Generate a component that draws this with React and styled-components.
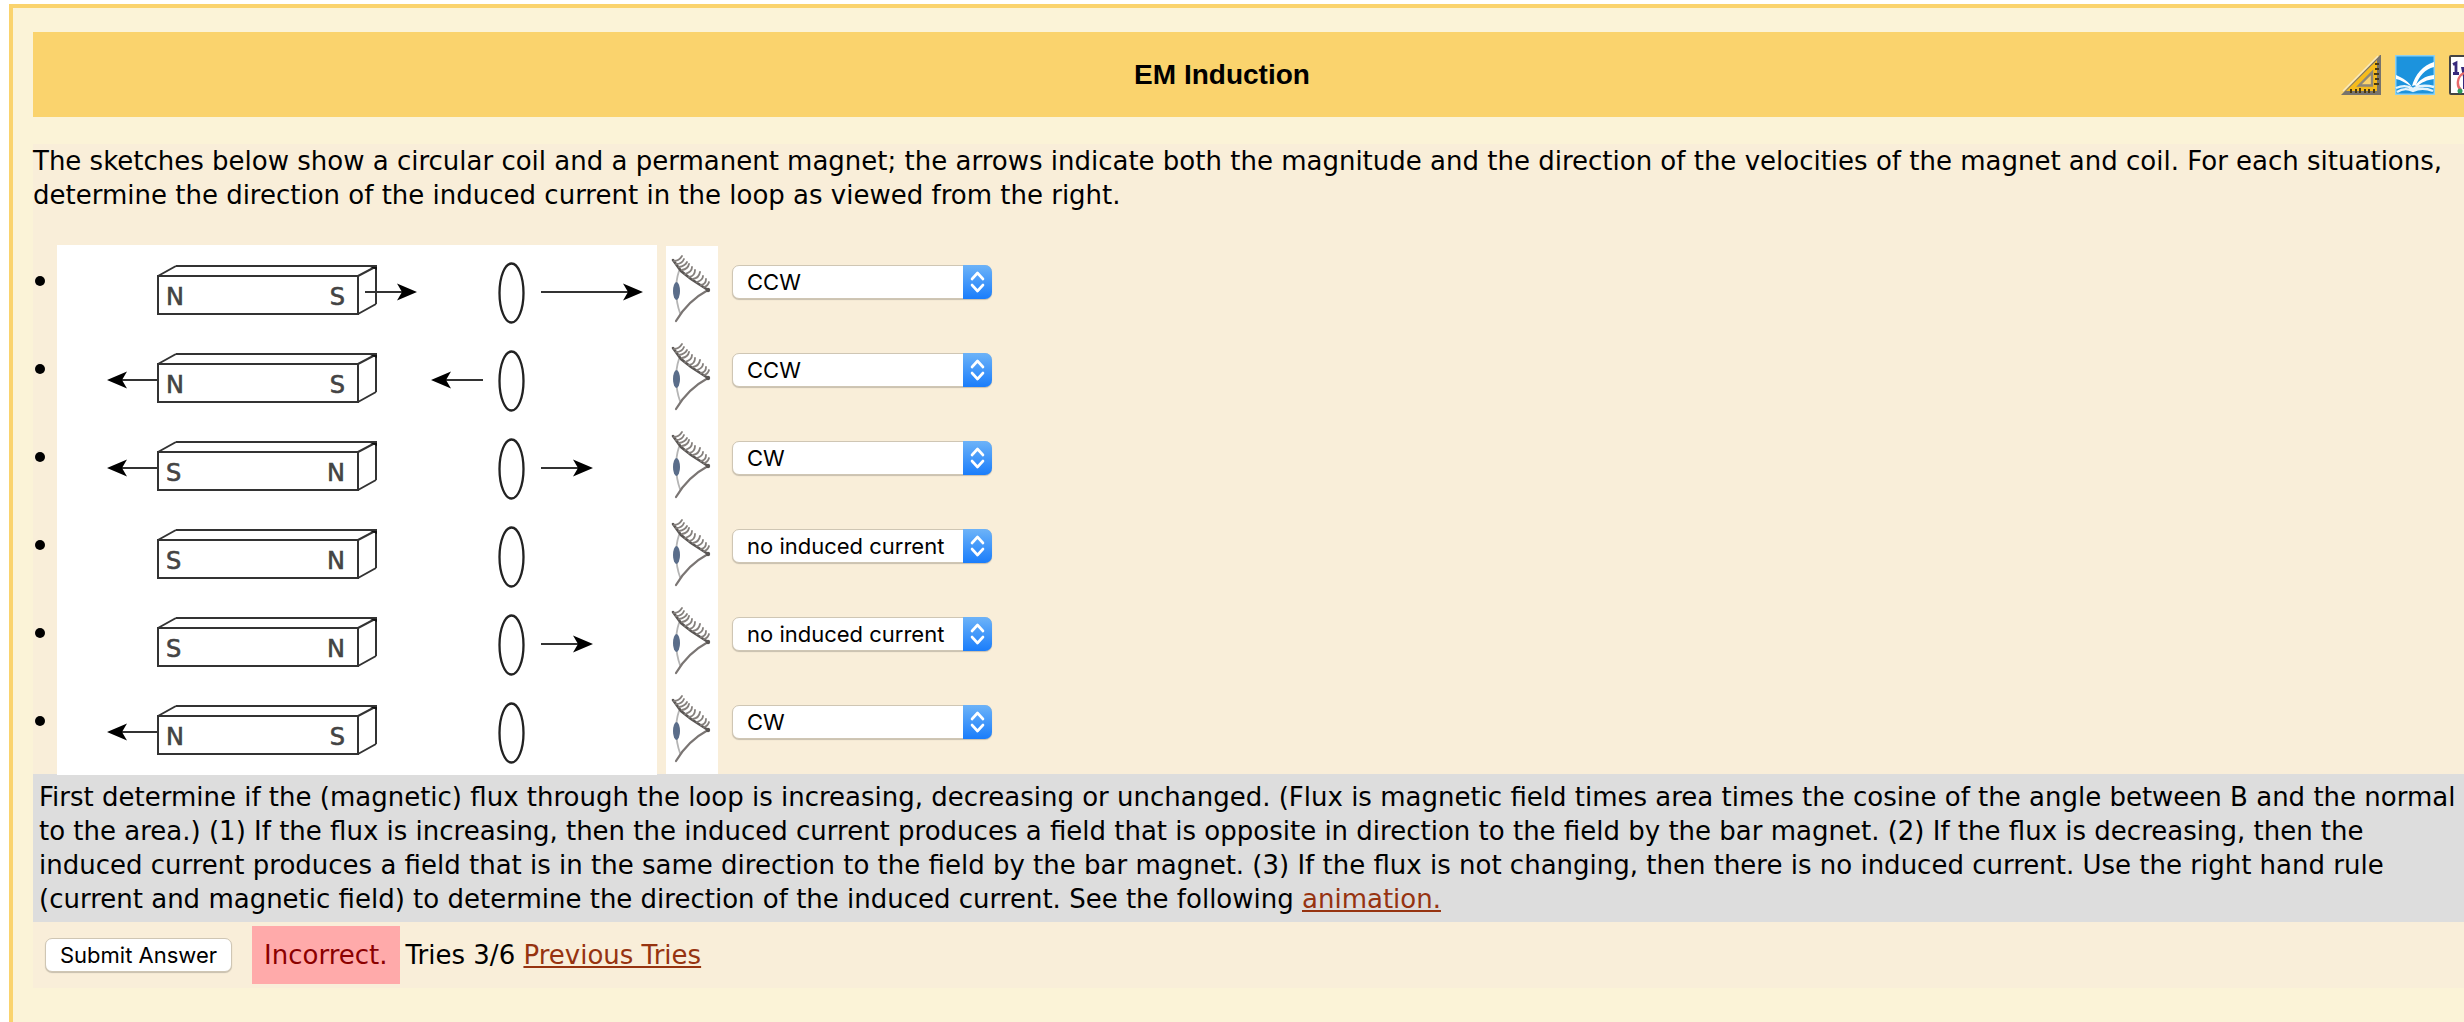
import styled, { createGlobalStyle } from "styled-components";

const sketches = [
  { poles: ["N", "S"], magnet: [365, 417], coil: [541, 643], answer: "CCW" },
  { poles: ["N", "S"], magnet: [158, 107], coil: [483, 431], answer: "CCW" },
  { poles: ["S", "N"], magnet: [158, 107], coil: [541, 593], answer: "CW" },
  { poles: ["S", "N"], answer: "no induced current" },
  { poles: ["S", "N"], coil: [541, 593], answer: "no induced current" },
  { poles: ["N", "S"], magnet: [158, 107], answer: "CW" },
];

const answers = ["CW", "CCW", "no induced current"];

const Arrow = ({ from, to }) => {
  const d = to > from ? -1 : 1;
  return (
    <g>
      <path d={`M${from} 47H${to + d * 8}`} stroke="#333" strokeWidth="2" />
      <path
        d={`M${to} 47L${to + d * 20} 38.5L${to + d * 15} 47L${to + d * 20} 55.5Z`}
        fill="#000"
      />
    </g>
  );
};

const Sketch = ({ poles, magnet, coil }) => (
  <SketchArt viewBox="57 0 600 90" role="img" aria-label="Magnet and coil">
    <g fill="none" stroke="#333" strokeWidth="2">
      <path d="M158 31H358V69H158Z" />
      <path d="M176 21H376V59" />
      <path d="M158 31L176 21M358 31L376 21.5M358 69L376 59" />
      <path d="M370 22H377V25Z" fill="#111" stroke="none" />
      <ellipse cx="511.5" cy="48" rx="12" ry="29.5" stroke="#222" strokeWidth="2.3" />
    </g>
    <PoleLabel x="166" y="60">{poles[0]}</PoleLabel>
    <PoleLabel x="345" y="60" textAnchor="end">{poles[1]}</PoleLabel>
    {magnet && <Arrow from={magnet[0]} to={magnet[1]} />}
    {coil && <Arrow from={coil[0]} to={coil[1]} />}
  </SketchArt>
);

const Eye = () => (
  <EyeArt viewBox="0 0 52 88" role="img" aria-label="Observer">
    <g fill="none" strokeLinecap="round">
      <path d="M13 25C9 37 9 53 14 67" stroke="#b5b5b5" strokeWidth="1.8" />
      <path d="M7 14L15 25L25 33L42 44" stroke="#5a5654" strokeWidth="2.6" />
      <path d="M42 44C29 51 17 63 10 75" stroke="#7a7573" strokeWidth="2.2" />
      <path
        d="M8 15Q13 15 16 10M10 18Q16 18 18 13M13 21Q19 20 21 16M16 24Q22 23 23 18M19 28Q26 26 26 21M23 31Q29 30 29 24M27 33Q33 32 34 26M31 36Q37 34 37 30M35 39Q40 38 40 33M38 41Q42 40 43 36"
        stroke="#85807d"
        strokeWidth="1.8"
      />
    </g>
    <ellipse cx="10.5" cy="45" rx="3.5" ry="9" fill="#5a6d8a" />
    <circle cx="42" cy="44" r="2.2" fill="#5a5654" />
  </EyeArt>
);

const RulerIcon = () => (
  <ToolArt viewBox="0 0 40 40">
    <path d="M0 40L39 0H40V40Z" fill="#77736c" />
    <path d="M5 36L36 5V36Z" fill="#f5bb1c" />
    <path d="M2 36L37 1" stroke="#f6e9c4" strokeWidth="1.4" />
    <path d="M18 30.5L31 17.5V30.5Z" fill="#fad36d" stroke="#8d8778" strokeWidth="2.4" />
    <path
      d="M10 34V38M15 34V38M19 33V38M24 34V38M28 34V38M33 34V38M34 9H38M34 14H38M33 19H38M34 24H38M33 29H38"
      stroke="#4b3a10"
      strokeWidth="2"
    />
  </ToolArt>
);

const BookIcon = () => (
  <ToolArt viewBox="0 0 40 40">
    <rect width="40" height="40" fill="#8dd0f0" />
    <rect x="1.5" y="1.5" width="37" height="37" fill="#1c93dd" />
    <path d="M1 20C8 23 14 27 17 32C11 28 6 25 1 24Z" fill="#fff" />
    <path d="M39 7C28 10 20 20 17 31L21 30C24 21 30 14 39 12Z" fill="#fff" />
    <path d="M39 20C30 21 24 25 20 31L23 31C27 27 32 25 39 24Z" fill="#fff" />
    <path
      d="M1 33C8 30 14 31 18 34C24 30 31 30 39 32M2 37C8 33 14 34 18 36C24 33 31 33 38 36"
      fill="none"
      stroke="#e4f4fc"
      strokeWidth="2.4"
    />
  </ToolArt>
);

const NotesIcon = () => (
  <ToolArt viewBox="0 0 40 40">
    <rect x="1" y="1" width="38" height="38" rx="1" fill="#fff" stroke="#444" strokeWidth="2" />
    <path d="M4 9.5L7 8V19M4 18.5H10" fill="none" stroke="#37297c" strokeWidth="2.8" />
    <path d="M12 12H18V34H14V22Z" fill="#37297c" />
    <path d="M15 18C8 21 7 31 12 35" fill="none" stroke="#e86a6a" strokeWidth="2.4" />
    <circle cx="11" cy="36" r="2.5" fill="#2f9c5c" />
  </ToolArt>
);

const AnswerSelect = ({ label, value }) => (
  <SelectBox>
    <Select aria-label={label} defaultValue={value}>
      {answers.map((answer) => (
        <option key={answer}>{answer}</option>
      ))}
    </Select>
    <Stepper viewBox="0 0 29 34" aria-hidden="true">
      <path d="M9 14L14.5 8L20 14M9 20L14.5 26L20 20" />
    </Stepper>
  </SelectBox>
);

const App = () => {
  return (
    <Page>
      <GlobalStyle />
      <Frame>
        <Header>
          <Title>EM Induction</Title>
          <Tools>
            <RulerIcon />
            <BookIcon />
            <NotesIcon />
          </Tools>
        </Header>
        <Problem>
          <Text>
            The sketches below show a circular coil and a permanent magnet; the arrows indicate
            both the magnitude and the direction of the velocities of the magnet and coil. For
            each situations,
            <br />
            determine the direction of the induced current in the loop as viewed from the right.
          </Text>
          <List>
            {sketches.map((item, i) => (
              <ListItem key={i}>
                <Sketch {...item} />
                <Eye />
                <AnswerSelect label={`Situation ${i + 1}`} value={item.answer} />
              </ListItem>
            ))}
          </List>
          <Hint>
            First determine if the (magnetic) flux through the loop is increasing, decreasing or
            unchanged. (Flux is magnetic field times area times the cosine of the angle between B
            and the normal
            <br />
            to the area.) (1) If the flux is increasing, then the induced current produces a field
            that is opposite in direction to the field by the bar magnet. (2) If the flux is
            decreasing, then the
            <br />
            induced current produces a field that is in the same direction to the field by the bar
            magnet. (3) If the flux is not changing, then there is no induced current. Use the
            right hand rule
            <br />
            (current and magnetic field) to determine the direction of the induced current. See
            the following <Link href="#animation">animation.</Link>
          </Hint>
          <Status>
            <SubmitButton type="button">Submit Answer</SubmitButton>
            <Verdict>Incorrect.</Verdict>
            <span>
              Tries 3/6 <Link href="#tries">Previous Tries</Link>
            </span>
          </Status>
        </Problem>
      </Frame>
    </Page>
  );
};

export default App;

const GlobalStyle = createGlobalStyle`
  body {
    margin: 0;
    background: #fff;
    color: #000;
    font: 26px/34px Verdana, "DejaVu Sans", sans-serif;
  }
`;

const Page = styled.div`
  padding: 4px 0 0 9px;
  overflow: hidden;
`;

const Frame = styled.div`
  box-sizing: border-box;
  width: calc(100% + 49px);
  min-height: calc(100vh - 4px);
  padding: 24px 20px 32px;
  border: 4px solid #fad36d;
  border-bottom: 0;
  background: #fbf3d7;
`;

const Header = styled.header`
  display: flex;
  align-items: center;
  height: 85px;
  background: #fad36d;
`;

const Title = styled.h1`
  flex: 1;
  margin: 0;
  padding-left: 70px;
  font: bold 28px/34px "Liberation Sans", sans-serif;
  text-align: center;
`;

const Tools = styled.div`
  display: flex;
  gap: 14px;
`;

const ToolArt = styled.svg`
  width: 40px;
  height: 40px;
`;

const Problem = styled.main`
  margin-top: 27px;
  background: #f9eed9;
`;

const Text = styled.p`
  margin: 0 0 34px;
  white-space: nowrap;
`;

const List = styled.ul`
  margin: 0;
  padding: 0;
  list-style: none;
`;

const ListItem = styled.li`
  display: flex;
  align-items: flex-start;
  height: 88px;

  &::before {
    content: "";
    width: 10px;
    height: 10px;
    margin: 30px 12px 0 2px;
    border-radius: 50%;
    background: #000;
  }
`;

/* the drawings are a little taller than their rows, so they join up */
const SketchArt = styled.svg`
  position: relative;
  width: 600px;
  height: 90px;
  margin: -1px 9px -1px 0;
  background: #fff;
`;

const PoleLabel = styled.text`
  fill: #444;
  stroke: #444;
  stroke-width: 0.6;
  font: 24px "DejaVu Sans", sans-serif;
`;

const EyeArt = styled.svg`
  width: 52px;
  height: 88px;
  background: #fff;
`;

const SelectBox = styled.div`
  display: grid;
  width: 260px;
  margin: 19px 0 0 14px;
`;

const Select = styled.select`
  grid-area: 1 / 1;
  height: 34px;
  padding: 0 40px 0 14px;
  border: 1px solid #cfc6b4;
  border-radius: 7px;
  background: #fff;
  box-shadow: 0 1px 1px rgba(0, 0, 0, 0.2);
  color: #000;
  font: 22px Inter, sans-serif;
  appearance: none;
`;

const Stepper = styled.svg`
  grid-area: 1 / 1;
  justify-self: end;
  width: 29px;
  height: 34px;
  border-radius: 0 7px 7px 0;
  background: linear-gradient(#6db3f8, #1a7dfb);
  fill: none;
  stroke: #fff;
  stroke-width: 2.6;
  stroke-linecap: round;
  stroke-linejoin: round;
  pointer-events: none;
`;

const Hint = styled.div`
  padding: 6px;
  background: #ddd;
  white-space: nowrap;
`;

const Link = styled.a`
  color: #963310;
  text-decoration: underline;
`;

const Status = styled.div`
  display: flex;
  align-items: center;
  padding: 4px 12px;
`;

const SubmitButton = styled.button`
  height: 34px;
  padding: 0 14px;
  border: 1px solid #cfc6b4;
  border-radius: 7px;
  background: #fff;
  box-shadow: 0 1px 1px rgba(0, 0, 0, 0.2);
  color: #000;
  font: 22px Inter, sans-serif;
`;

const Verdict = styled.span`
  margin: 0 6px 0 20px;
  padding: 12px;
  background: #ffaaaa;
  color: #8b0000;
`;
